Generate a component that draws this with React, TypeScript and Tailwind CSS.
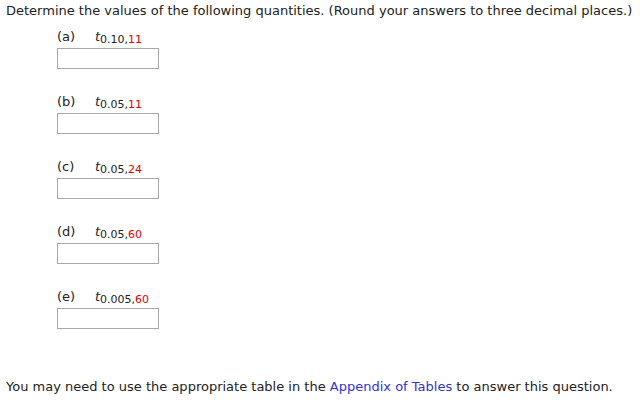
const items = [
  { label: '(a)', sub: '0.10', df: '11' },
  { label: '(b)', sub: '0.05', df: '11' },
  { label: '(c)', sub: '0.05', df: '24' },
  { label: '(d)', sub: '0.05', df: '60' },
  { label: '(e)', sub: '0.005', df: '60' },
];

export default function App() {
  return (
    <div className="w-[641px] h-[402px] bg-white text-[#222] text-[13px] leading-[16px] font-['DejaVu_Sans',Verdana,sans-serif] overflow-hidden">
      <p className="pl-[6px] pt-[3px]">
        Determine the values of the following quantities. (Round your answers to three decimal places.)
      </p>

      <div className="pl-[57px] pt-[10px] flex flex-col gap-[25px]">
        {items.map((it) => (
          <div key={it.label}>
            <div className="flex items-start h-[17px]">
              <span className="w-[38px]">{it.label}</span>
              <span className="italic">t</span>
              <span className="text-[11px] mt-[4px] leading-[14px]">
                {it.sub},<span className="text-[#e00000]">{it.df}</span>
              </span>
            </div>
            <input
              type="text"
              className="mt-[2px] block w-[102px] h-[21px] border border-[#a9a9a9] bg-white"
            />
          </div>
        ))}
      </div>

      <p className="pl-[6px] pt-[50px] text-[13px]">
        You may need to use the appropriate table in the{' '}
        <span className="text-[#3333cc]">Appendix of Tables</span> to answer this question.
      </p>
    </div>
  );
}
